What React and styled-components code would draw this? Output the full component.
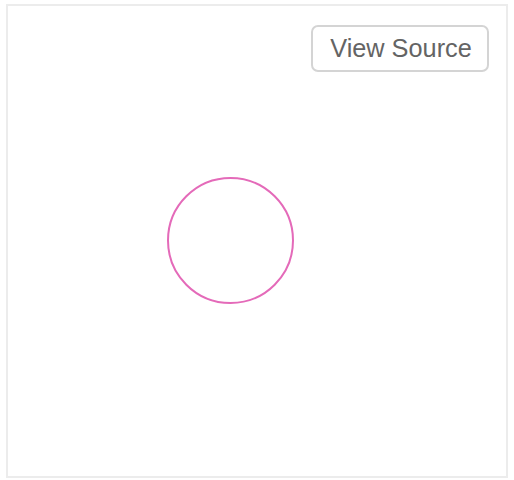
import React from "react";
import styled, { createGlobalStyle } from "styled-components";

const Global = createGlobalStyle`
  html, body { margin: 0; padding: 0; background: #fff; }
  body { font-family: "Liberation Sans", Arial, sans-serif; }
`;

const Page = styled.div`
  padding: 4px 6px;
`;

const Frame = styled.div`
  position: relative;
  width: 502px;
  height: 474px;
  box-sizing: border-box;
  border: 2px solid #ececec;
  background: #fff;
`;

const Canvas = styled.svg`
  display: block;
  width: 100%;
  height: 100%;
`;

const SourceButton = styled.button`
  position: absolute;
  top: 19px;
  right: 17px;
  width: 178px;
  height: 47px;
  box-sizing: border-box;
  border: 2px solid #d4d4d4;
  border-radius: 7px;
  background: #fff;
  color: #646464;
  font-family: "Liberation Sans", Arial, sans-serif;
  font-size: 25.3px;
  line-height: 1;
  padding: 0 0 0 2px;
  cursor: pointer;
`;

export default function App() {
  return (
    <>
      <Global />
      <Page>
        <Frame>
          <Canvas viewBox="0 0 498 470">
            <circle cx="222.5" cy="234.5" r="62.5" fill="none" stroke="#e46ab9" strokeWidth="2" />
          </Canvas>
          <SourceButton>View Source</SourceButton>
        </Frame>
      </Page>
    </>
  );
}
